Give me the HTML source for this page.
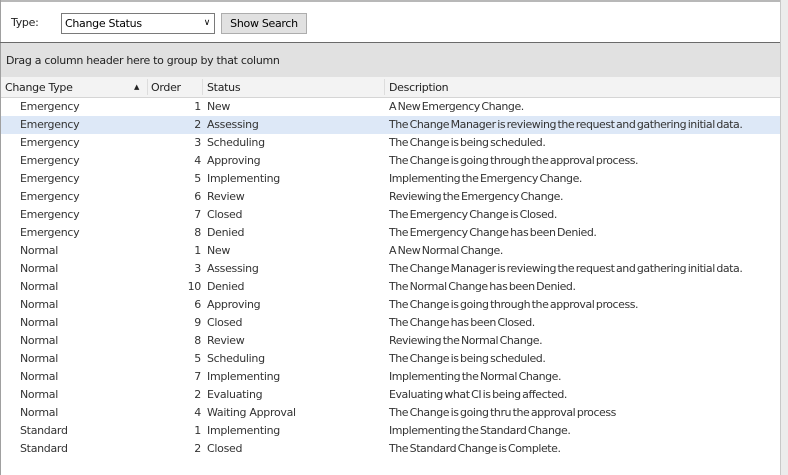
<!DOCTYPE html>
<html><head><style>
*{margin:0;padding:0;box-sizing:border-box}
body{width:788px;height:475px;background:#fff;font-family:"DejaVu Sans","Liberation Sans",sans-serif;font-size:11px;color:#333;position:relative;overflow:hidden;letter-spacing:-0.3px}
.a{position:absolute;white-space:nowrap}
.row{position:absolute;left:1px;width:779px;height:18px;line-height:18px}
.row span{position:absolute}
.row span.d{letter-spacing:-0.45px;word-spacing:-1.5px}
</style></head><body>
<div class="a" style="left:0;top:0;width:780px;height:2px;background:#b8b8b8"></div>
<div class="a" style="left:780px;top:0;width:1px;height:475px;background:#c8c8c8"></div>
<div class="a" style="left:781px;top:0;width:7px;height:475px;background:#ececec"></div>
<div class="a" style="left:0;top:0;width:1px;height:475px;background:#a0a0a0"></div>
<div class="a" style="left:11px;top:16px;color:#222">Type:</div>
<div class="a" style="left:61px;top:13px;width:154px;height:21px;border:1px solid #7a7a7a;background:#fff;line-height:19px;padding-left:3px;color:#000">Change Status<span style="position:absolute;right:4px;top:0;font-size:9px">&#8744;</span></div>
<div class="a" style="left:221px;top:13px;width:86px;height:21px;border:1px solid #adadad;background:#e1e1e1;line-height:19px;text-align:center;color:#000">Show Search</div>
<div class="a" style="left:0;top:42px;width:780px;height:1px;background:#6a6a6a"></div>
<div class="a" style="left:1px;top:43px;width:779px;height:34px;background:#e1e1e1;line-height:35px;padding-left:5px;color:#222">Drag a column header here to group by that column</div>
<div class="a" style="left:1px;top:77px;width:779px;height:21px;background:#f3f3f3;border-bottom:1px solid #d5d5d5;line-height:21px;color:#222">
<span class="a" style="left:4px">Change Type</span><span class="a" style="left:133px;font-size:7px">&#9650;</span>
<span class="a" style="left:146px;top:2px;width:1px;height:16px;background:#ddd"></span>
<span class="a" style="left:150px">Order</span>
<span class="a" style="left:201px;top:2px;width:1px;height:16px;background:#ddd"></span>
<span class="a" style="left:206px">Status</span>
<span class="a" style="left:383px;top:2px;width:1px;height:16px;background:#ddd"></span>
<span class="a" style="left:388px">Description</span>
</div>
<div id="rows"></div>
<script>
var d=[["Emergency",1,"New","A New Emergency Change."],["Emergency",2,"Assessing","The Change Manager is reviewing the request and gathering initial data."],["Emergency",3,"Scheduling","The Change is being scheduled."],["Emergency",4,"Approving","The Change is going through the approval process."],["Emergency",5,"Implementing","Implementing the Emergency Change."],["Emergency",6,"Review","Reviewing the Emergency Change."],["Emergency",7,"Closed","The Emergency Change is Closed."],["Emergency",8,"Denied","The Emergency Change has been Denied."],["Normal",1,"New","A New Normal Change."],["Normal",3,"Assessing","The Change Manager is reviewing the request and gathering initial data."],["Normal",10,"Denied","The Normal Change has been Denied."],["Normal",6,"Approving","The Change is going through the approval process."],["Normal",9,"Closed","The Change has been Closed."],["Normal",8,"Review","Reviewing the Normal Change."],["Normal",5,"Scheduling","The Change is being scheduled."],["Normal",7,"Implementing","Implementing the Normal Change."],["Normal",2,"Evaluating","Evaluating what CI is being affected."],["Normal",4,"Waiting Approval","The Change is going thru the approval process"],["Standard",1,"Implementing","Implementing the Standard Change."],["Standard",2,"Closed","The Standard Change is Complete."]];
var h="";d.forEach(function(r,i){h+='<div class="row" style="top:'+(98+i*18)+'px;'+(i==1?'background:#dde8f7':'')+'"><span style="left:19px">'+r[0]+'</span><span style="right:579px">'+r[1]+'</span><span style="left:206px">'+r[2]+'</span><span class="d" style="left:388px">'+r[3]+'</span></div>'});
document.getElementById("rows").innerHTML=h;
</script>
</body></html>
